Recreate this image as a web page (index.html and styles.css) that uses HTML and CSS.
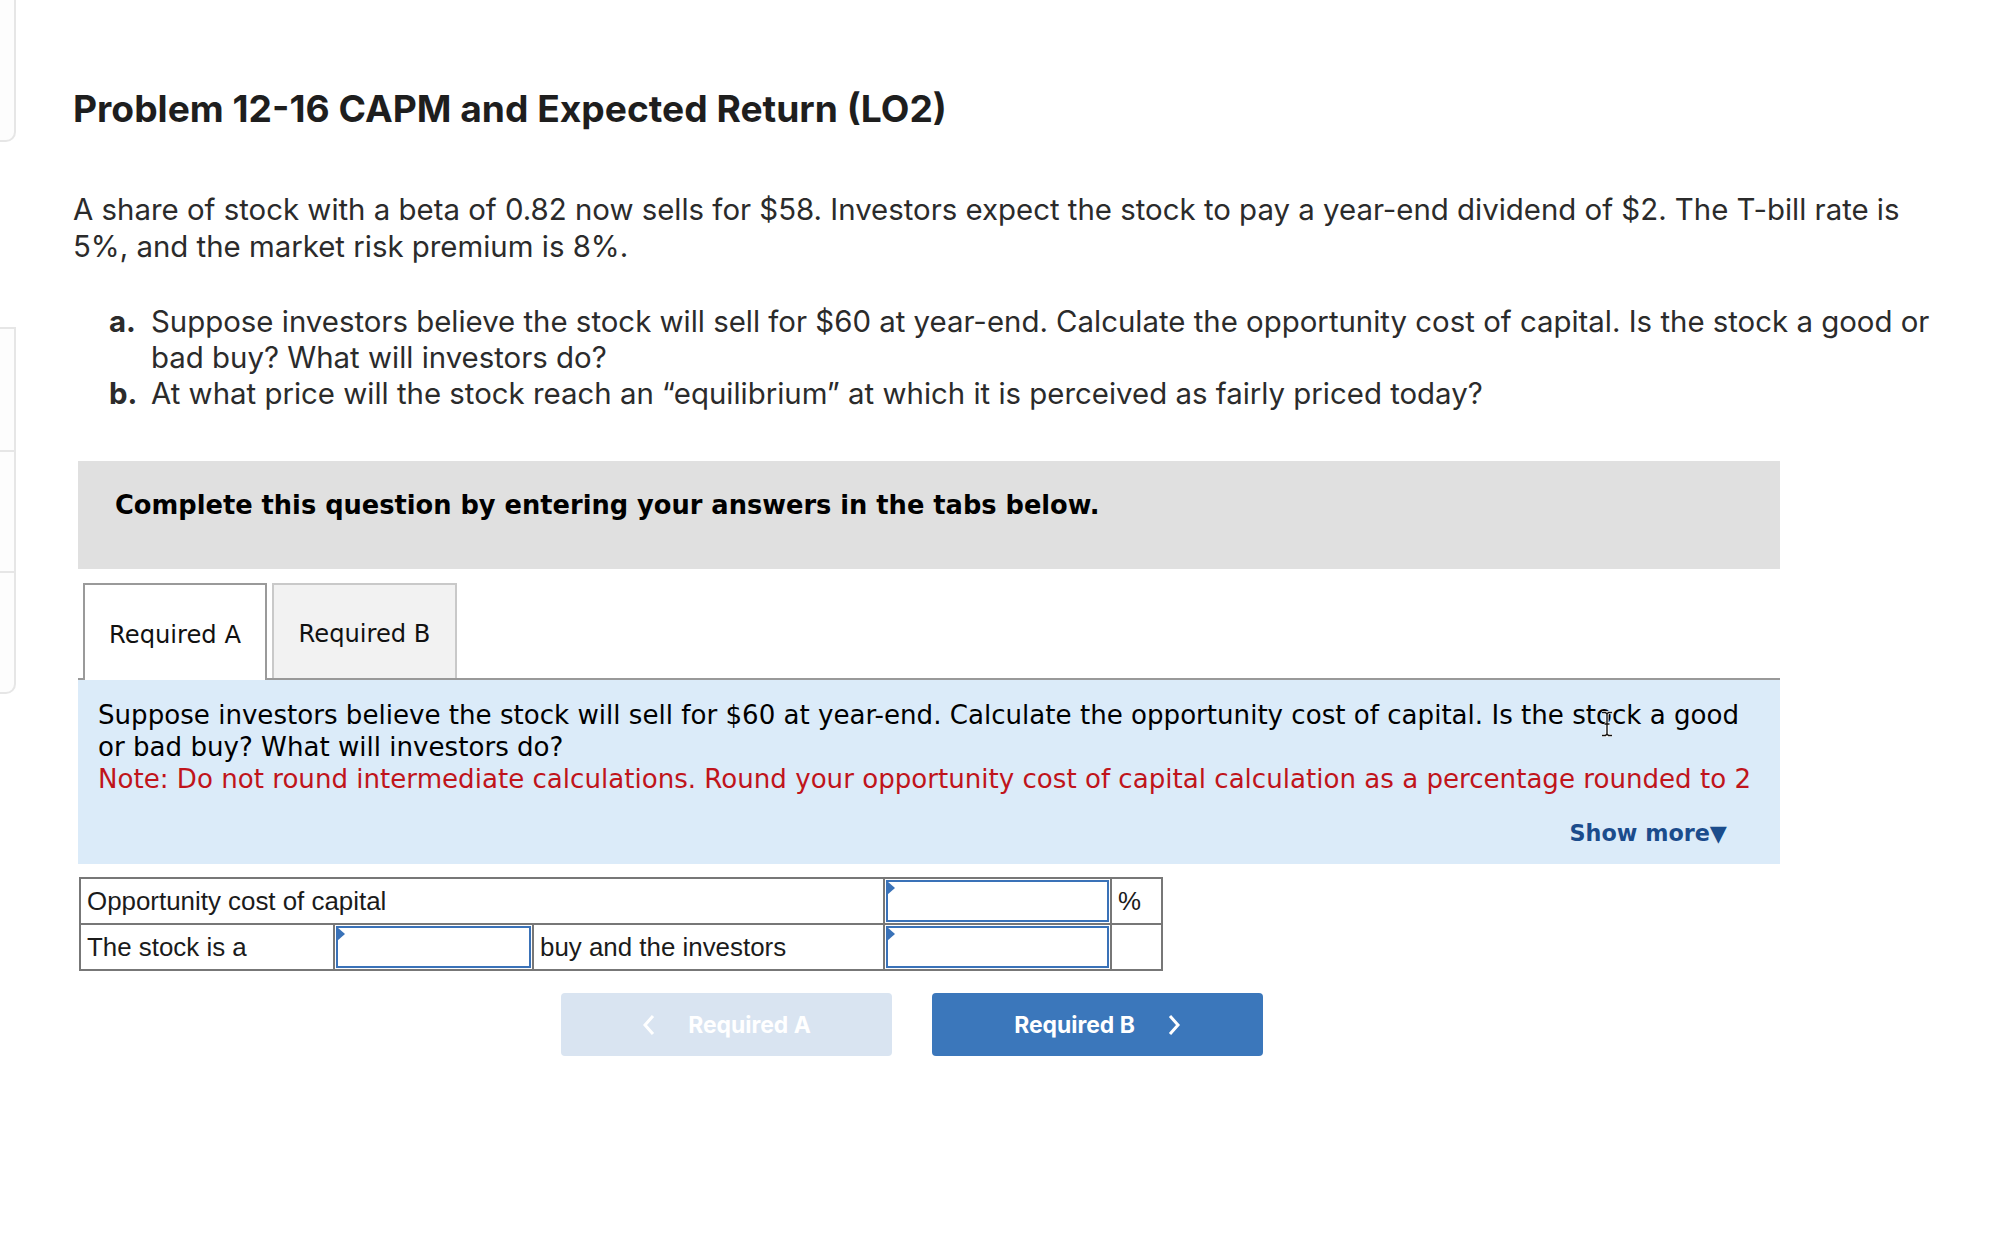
FILE: index.html
```html
<!DOCTYPE html>
<html lang="en">
<head>
<meta charset="utf-8">
<title>Problem 12-16 CAPM and Expected Return (LO2)</title>
<link rel="stylesheet" href="styles.css">
</head>
<body>
<div class="page">
  <aside class="rail">
    <div class="rail-top"></div>
    <div class="rail-group">
      <div class="rail-item"></div>
      <div class="rail-item"></div>
      <div class="rail-item"></div>
    </div>
  </aside>
  <main class="main">
    <h1 class="title">Problem 12-16 CAPM and Expected Return (LO2)</h1>
    <p class="intro">A share of stock with a beta of 0.82 now sells for $58. Investors expect the stock to pay a year-end dividend of $2. The T-bill rate is 5%, and the market risk premium is 8%.</p>
    <ol class="parts">
      <li class="part"><span class="mark">a.</span><span>Suppose investors believe the stock will sell for $60 at year-end. Calculate the opportunity cost of capital. Is the stock a good or bad buy? What will investors do?</span></li>
      <li class="part"><span class="mark">b.</span><span>At what price will the stock reach an “equilibrium” at which it is perceived as fairly priced today?</span></li>
    </ol>
    <section class="qbox">
      <div class="instruct">Complete this question by entering your answers in the tabs below.</div>
      <div class="tabs">
        <div class="tab active">Required A</div>
        <div class="tab">Required B</div>
      </div>
      <div class="panel">
        <div class="panel-text">
          <p>Suppose investors believe the stock will sell for $60 at year-end. Calculate the opportunity cost of capital. Is the stock a good or bad buy? What will investors do?</p>
          <p class="note">Note: Do not round intermediate calculations. Round your opportunity cost of capital calculation as a percentage rounded to 2<span class="collapsed"> decimal places.</span></p>
        </div>
        <div class="more"><span class="more-link">Show more▼</span></div>
        <svg class="cursor" width="14" height="26" viewBox="0 0 14 26"><path d="M2 1.5h3.5l1.5 1.5 1.5-1.5H12M7 3v20M2 24.5h3.5L7 23l1.5 1.5H12M4.5 13h5" fill="none" stroke="#fff" stroke-width="3.2"/><path d="M2 1.5h3.5l1.5 1.5 1.5-1.5H12M7 3v20M2 24.5h3.5L7 23l1.5 1.5H12M4.5 13h5" fill="none" stroke="#111" stroke-width="1.4"/></svg>
      </div>
      <table class="answers">
        <colgroup><col class="c1"><col class="c2"><col class="c3"><col class="c4"><col class="c5"></colgroup>
        <tr>
          <td colspan="3" class="lbl">Opportunity cost of capital</td>
          <td class="inp"><div class="field"></div></td>
          <td class="lbl unit">%</td>
        </tr>
        <tr>
          <td class="lbl">The stock is a</td>
          <td class="inp"><div class="field"></div></td>
          <td class="lbl">buy and the investors</td>
          <td class="inp"><div class="field"></div></td>
          <td class="lbl"></td>
        </tr>
      </table>
      <div class="nav">
        <button class="btn prev" disabled><svg class="chev" width="14" height="22" viewBox="0 0 14 22"><path d="M11 2 3 11l8 9" fill="none" stroke="#fff" stroke-width="3"/></svg><span>Required A</span></button>
        <button class="btn next"><span>Required B</span><svg class="chev" width="14" height="22" viewBox="0 0 14 22"><path d="M3 2l8 9-8 9" fill="none" stroke="#fff" stroke-width="3"/></svg></button>
      </div>
    </section>
  </main>
</div>
</body>
</html>
```

FILE: styles.css
```css
* { box-sizing: border-box; }
html, body { margin: 0; padding: 0; background: #fff; }
body { font-family: "Inter", "Liberation Sans", sans-serif; color: #2b2b2b; }

.page { display: flex; align-items: flex-start; }

.rail { width: 16px; flex: none; }
.rail-top {
  height: 142px;
  border-right: 2px solid #e6e6e6;
  border-bottom: 2px solid #e6e6e6;
  border-bottom-right-radius: 10px;
  background: #fdfdfd;
}
.rail-group {
  margin-top: 185px;
  border: 2px solid #e6e6e6;
  border-left: none;
  border-radius: 0 0 10px 0;
  background: #fdfdfd;
}
.rail-item { height: 121px; }
.rail-item + .rail-item { border-top: 2px solid #e6e6e6; }

.main { flex: 1; margin-left: 57px; padding-right: 51px; }

.title {
  margin: 87px 0 0;
  font-size: 37.2px;
  line-height: 44px;
  font-weight: 700;
  color: #1e1e1e;
}
.intro {
  margin: 60px 0 0;
  font-size: 29.4px;
  line-height: 37px;
}
.parts { list-style: none; margin: 39px 0 0; padding: 0 0 0 36px; font-size: 29.4px; line-height: 36px; }
.part { display: flex; }
.mark { width: 42px; flex: none; font-weight: 700; }

.qbox { margin: 49px 0 0 5px; width: 1702px; }
.instruct {
  background: #e0e0e0;
  height: 108px;
  padding: 28px 20px 0 37px;
  font-family: "DejaVu Sans", Verdana, sans-serif;
  font-weight: 700;
  font-size: 25.7px;
  line-height: 32px;
  color: #000;
}
.tabs {
  display: flex;
  gap: 5px;
  margin-top: 14px;
  padding-left: 5px;
  border-bottom: 2px solid #999;
}
.tab {
  width: 185px;
  height: 95px;
  display: flex;
  align-items: center;
  justify-content: center;
  padding-top: 4px;
  font-family: "DejaVu Sans", Verdana, sans-serif;
  font-size: 24.2px;
  color: #111;
  background: #f2f2f2;
  border: 2px solid #c9c9c9;
  border-bottom: none;
}
.tab.active {
  width: 184px;
  height: 97px;
  margin-bottom: -2px;
  background: #fff;
  border-color: #9a9a9a;
}

.panel {
  position: relative;
  background: #dbebf9;
  padding: 19px 20px 15px 20px;
  font-family: "DejaVu Sans", Verdana, sans-serif;
  font-size: 26.1px;
  line-height: 32px;
  color: #000;
}
.panel-text p { margin: 0; }
.panel-text .note { color: #c0141b; }
.collapsed { display: none; }
.more { margin-top: 22px; padding-right: 33px; text-align: right; font-size: 22.3px; }
.more-link { font-weight: 700; color: #1b4c8c; }
.cursor { position: absolute; left: 1522px; top: 31px; }

.answers {
  margin: 13px 0 0 1px;
  border-collapse: collapse;
  table-layout: fixed;
  width: 1082px;
  font-family: "Liberation Sans", Arial, sans-serif;
  font-size: 25.9px;
  color: #1b1b1b;
}
.c1 { width: 254px; } .c2 { width: 199px; } .c3 { width: 351px; } .c4 { width: 227px; } .c5 { width: 51px; }
.answers td { border: 2px solid #777; height: 46px; padding: 0 6px; vertical-align: middle; white-space: nowrap; }
.answers td.inp { padding: 1px; }
.field {
  position: relative;
  height: 42px;
  border: 2px solid #3a72b8;
  background: #fff;
}
.field::before {
  content: "";
  position: absolute;
  left: -1px; top: -1px;
  border-top: 7px solid transparent;
  border-bottom: 7px solid transparent;
  border-left: 8px solid #3a72b8;
}

.nav { display: flex; gap: 40px; margin-top: 22px; padding-left: 483px; }
.btn {
  width: 331px;
  height: 63px;
  border: none;
  border-radius: 4px;
  display: flex;
  align-items: center;
  justify-content: center;
  gap: 32px;
  font-family: "Inter", sans-serif;
  font-weight: 700;
  font-size: 22.9px;
  color: #fff;
}
.btn.prev { background: #d9e4f1; }
.btn.next { background: #3b77bb; }
```
